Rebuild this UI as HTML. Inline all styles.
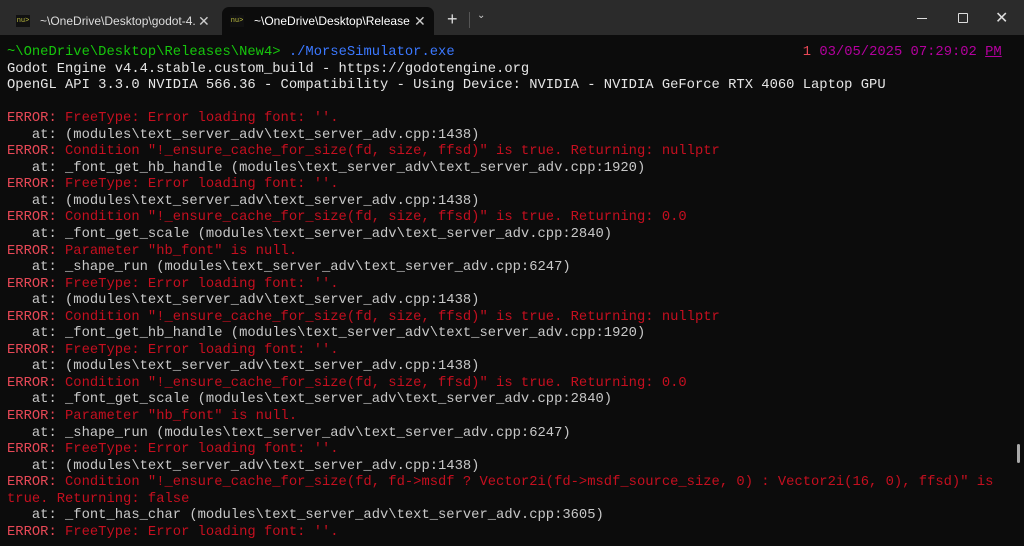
<!DOCTYPE html>
<html><head><meta charset="utf-8"><style>
html,body{margin:0;padding:0;width:1024px;height:546px;overflow:hidden;background:#0c0c0c;}
.bar{position:absolute;left:0;top:0;width:1024px;height:35px;background:#2b2b2b;}
.tab{position:absolute;top:7px;height:28px;font:12px "Liberation Sans",sans-serif;color:#ddd;line-height:28px;}
.t1{left:8px;width:205px;}
.t2{left:222px;width:212px;background:#0c0c0c;border-radius:7px 7px 0 0;color:#fff;}
.ic{position:absolute;top:8px;width:14px;height:12px;background:#111;font:7px "Liberation Mono",monospace;color:#bfbf40;line-height:12px;text-align:center;}
.x{position:absolute;top:0;font-size:14px;color:#ccc;}
pre{position:absolute;left:7px;top:44px;margin:0;font:13.82px/16.55px "Liberation Mono",monospace;color:#c8c8c8;white-space:pre;}
.g{color:#16c60c}.b{color:#3b78ff}.e{color:#e74856}.r{color:#c50f1f}.m{color:#b4009e}
.w{color:#e6e6e6}
</style></head><body>
<div class="bar">
<div class="tab t1"><div class="ic" style="left:8px">nu&gt;</div><span style="position:absolute;left:32px">~\OneDrive\Desktop\godot-4.</span><span class="x" style="left:190px">✕</span></div>
<div class="tab t2"><div class="ic" style="left:8px">nu&gt;</div><span style="position:absolute;left:32px">~\OneDrive\Desktop\Release</span><span class="x" style="left:192px">✕</span></div>
<div style="position:absolute;left:447px;top:9px;color:#ddd;font:18px 'Liberation Sans',sans-serif">+</div>
<div style="position:absolute;left:469px;top:12px;width:1px;height:16px;background:#555"></div>
<div style="position:absolute;left:477px;top:10px;color:#ccc;font:10px 'Liberation Sans',sans-serif">⌄</div>
<div style="position:absolute;left:917px;top:18px;width:10px;height:1px;background:#ddd"></div>
<div style="position:absolute;left:958px;top:13px;width:8px;height:8px;border:1px solid #ddd;border-radius:1px"></div>
<div style="position:absolute;left:995px;top:8px;color:#ddd;font:16px 'Liberation Sans',sans-serif">✕</div>
</div>
<div style="position:absolute;left:1017px;top:444px;width:3px;height:19px;background:#aaa;border-radius:2px"></div>
<pre><span class="g">~\OneDrive\Desktop\Releases\New4&gt;</span> <span class="b">./MorseSimulator.exe</span>                                          <span class="e">1</span> <span class="m">03/05/2025 07:29:02 <u>PM</u></span>
<span class="w">Godot Engine v4.4.stable.custom_build - https://godotengine.org
OpenGL API 3.3.0 NVIDIA 566.36 - Compatibility - Using Device: NVIDIA - NVIDIA GeForce RTX 4060 Laptop GPU</span>

<span class="e">ERROR:</span><span class="r"> FreeType: Error loading font: ''.</span>
   at: (modules\text_server_adv\text_server_adv.cpp:1438)
<span class="e">ERROR:</span><span class="r"> Condition "!_ensure_cache_for_size(fd, size, ffsd)" is true. Returning: nullptr</span>
   at: _font_get_hb_handle (modules\text_server_adv\text_server_adv.cpp:1920)
<span class="e">ERROR:</span><span class="r"> FreeType: Error loading font: ''.</span>
   at: (modules\text_server_adv\text_server_adv.cpp:1438)
<span class="e">ERROR:</span><span class="r"> Condition "!_ensure_cache_for_size(fd, size, ffsd)" is true. Returning: 0.0</span>
   at: _font_get_scale (modules\text_server_adv\text_server_adv.cpp:2840)
<span class="e">ERROR:</span><span class="r"> Parameter "hb_font" is null.</span>
   at: _shape_run (modules\text_server_adv\text_server_adv.cpp:6247)
<span class="e">ERROR:</span><span class="r"> FreeType: Error loading font: ''.</span>
   at: (modules\text_server_adv\text_server_adv.cpp:1438)
<span class="e">ERROR:</span><span class="r"> Condition "!_ensure_cache_for_size(fd, size, ffsd)" is true. Returning: nullptr</span>
   at: _font_get_hb_handle (modules\text_server_adv\text_server_adv.cpp:1920)
<span class="e">ERROR:</span><span class="r"> FreeType: Error loading font: ''.</span>
   at: (modules\text_server_adv\text_server_adv.cpp:1438)
<span class="e">ERROR:</span><span class="r"> Condition "!_ensure_cache_for_size(fd, size, ffsd)" is true. Returning: 0.0</span>
   at: _font_get_scale (modules\text_server_adv\text_server_adv.cpp:2840)
<span class="e">ERROR:</span><span class="r"> Parameter "hb_font" is null.</span>
   at: _shape_run (modules\text_server_adv\text_server_adv.cpp:6247)
<span class="e">ERROR:</span><span class="r"> FreeType: Error loading font: ''.</span>
   at: (modules\text_server_adv\text_server_adv.cpp:1438)
<span class="e">ERROR:</span><span class="r"> Condition "!_ensure_cache_for_size(fd, fd-&gt;msdf ? Vector2i(fd-&gt;msdf_source_size, 0) : Vector2i(16, 0), ffsd)" is
true. Returning: false</span>
   at: _font_has_char (modules\text_server_adv\text_server_adv.cpp:3605)
<span class="e">ERROR:</span><span class="r"> FreeType: Error loading font: ''.</span></pre>
</body></html>
